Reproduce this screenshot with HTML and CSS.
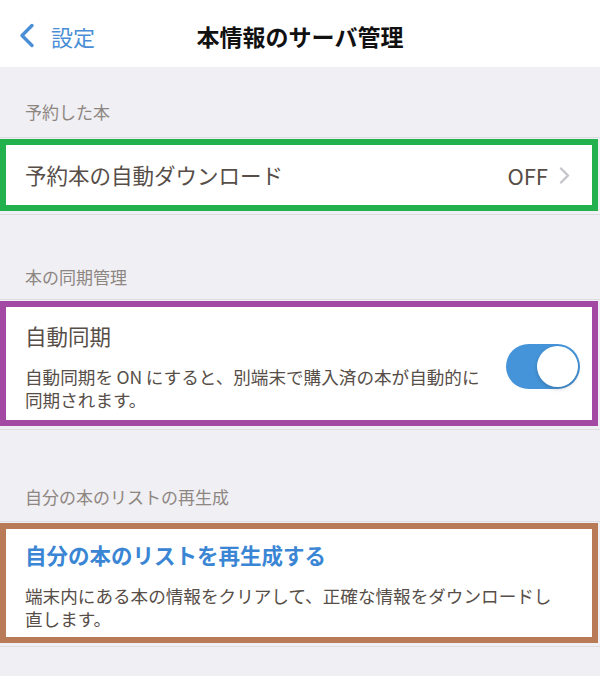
FILE: index.html
```html
<!DOCTYPE html>
<html lang="ja">
    <head>
        <meta charset="UTF-8">
        <meta name="viewport" content="width=device-width, initial-scale=1.0">
        <title>本情報のサーバ管理</title>
        <link rel="stylesheet" href="styles.css">
    </head>
    <body>
        <header class="nav">
            <a class="nav-back" href="#">
                <svg width="17" height="25" viewBox="0 0 17 25">
                    <path d="M14 2.5 L4 12.5 L14 22.5" fill="none" stroke="#4a8ed6" stroke-width="3.4" stroke-linecap="round" stroke-linejoin="round"/>
                </svg>
                <span>設定</span>
            </a>
            <h1 class="nav-title">本情報のサーバ管理</h1>
            <span></span>
        </header>

        <section class="group">
            <div class="group-label first">予約した本</div>
            <div class="cell-wrap">
                <div class="cell row green">
                    <span class="cell-text">予約本の自動ダウンロード</span>
                    <span class="cell-value">
                        OFF
                        <svg width="11" height="17" viewBox="0 0 11 17">
                            <path d="M2 1.5 L9 8.5 L2 15.5" fill="none" stroke="#c5c5ca" stroke-width="2.4" stroke-linecap="round" stroke-linejoin="round"/>
                        </svg>
                    </span>
                </div>
            </div>
        </section>

        <section class="group">
            <div class="group-label second">本の同期管理</div>
            <div class="cell-wrap">
                <div class="cell row purple">
                    <div class="cell-body">
                        <div class="cell-text">自動同期</div>
                        <p class="cell-desc">自動同期を&thinsp;ON&thinsp;にすると、別端末で購入済の本が自動的に同期されます。</p>
                    </div>
                    <div class="toggle on"><div class="knob"></div></div>
                </div>
            </div>
        </section>

        <section class="group">
            <div class="group-label third">自分の本のリストの再生成</div>
            <div class="cell-wrap">
                <div class="cell brown">
                    <div class="cell-action">自分の本のリストを再生成する</div>
                    <p class="cell-desc">端末内にある本の情報をクリアして、正確な情報をダウンロードし直します。</p>
                </div>
            </div>
        </section>
    </body>
</html>
```

FILE: styles.css
```css
*{
    box-sizing: border-box;
}
body{
    margin: 0;
    background-color: #efeff4;
    font-family: "Noto Sans CJK JP", "Noto Sans", sans-serif;
    color: #574e48;
}
p{margin: 0;}

/* top bar */
.nav{
    display: grid;
    grid-template-columns: 1fr auto 1fr;
    align-items: center;
    height: 67px;
    padding-top: 4px;
    background-color: white;
}
.nav-back{
    display: flex;
    align-items: center;
    gap: 16px;
    padding-left: 18px;
    color: #4a8ed6;
    font-size: 22px;
    line-height: 28px;
    text-decoration: none;
}
.nav-title{
    margin: 0;
    font-size: 23px;
    line-height: 28px;
    font-weight: bold;
    color: #111;
}

/* groups */
.group-label{
    padding: 0 25px 12px;
    font-size: 17px;
    line-height: 24px;
    color: #8e8681;
}
.group-label.first{padding-top: 33px; padding-bottom: 13px;}
.group-label.second{padding-top: 50px; padding-bottom: 10px;}
.group-label.third{padding-top: 55px;}
.cell-wrap{
    padding: 1px 2px 3px 0;
    border-top: 1px solid #dcdce1;
    border-bottom: 1px solid #dcdce1;
}
.cell{
    background-color: white;
    border: 6px solid;
}
.row{
    display: flex;
    align-items: center;
}
.green{
    border-color: #22b14c;
    height: 72px;
    padding: 0 22px 0 19px;
    justify-content: space-between;
}
.purple{
    border-color: #a349a4;
    padding: 15px 12px 9px 19px;
    gap: 12px;
}
.brown{
    border-color: #b97a57;
    padding: 12px 30px 7px 19px;
}
.cell-text{
    font-size: 21.5px;
    line-height: 28px;
}
.cell-value{
    display: flex;
    align-items: center;
    gap: 11px;
    font-size: 22px;
    line-height: 28px;
}
.cell-body{flex: 1;}
.cell-desc{
    margin-top: 15px;
    font-size: 17.6px;
    line-height: 23px;
}
.cell-action{
    font-size: 21.5px;
    line-height: 28px;
    font-weight: bold;
    color: #3a86d4;
}

/* switch */
.toggle{
    flex: none;
    position: relative;
    width: 74px;
    height: 45px;
    border-radius: 23px;
    background-color: #e5e5ea;
}
.toggle.on{background-color: #4594d9;}
.knob{
    position: absolute;
    top: 2px;
    right: 2px;
    width: 41px;
    height: 41px;
    border-radius: 50%;
    background-color: white;
    box-shadow: 0 2px 4px rgba(0,0,0,0.18);
}
```
